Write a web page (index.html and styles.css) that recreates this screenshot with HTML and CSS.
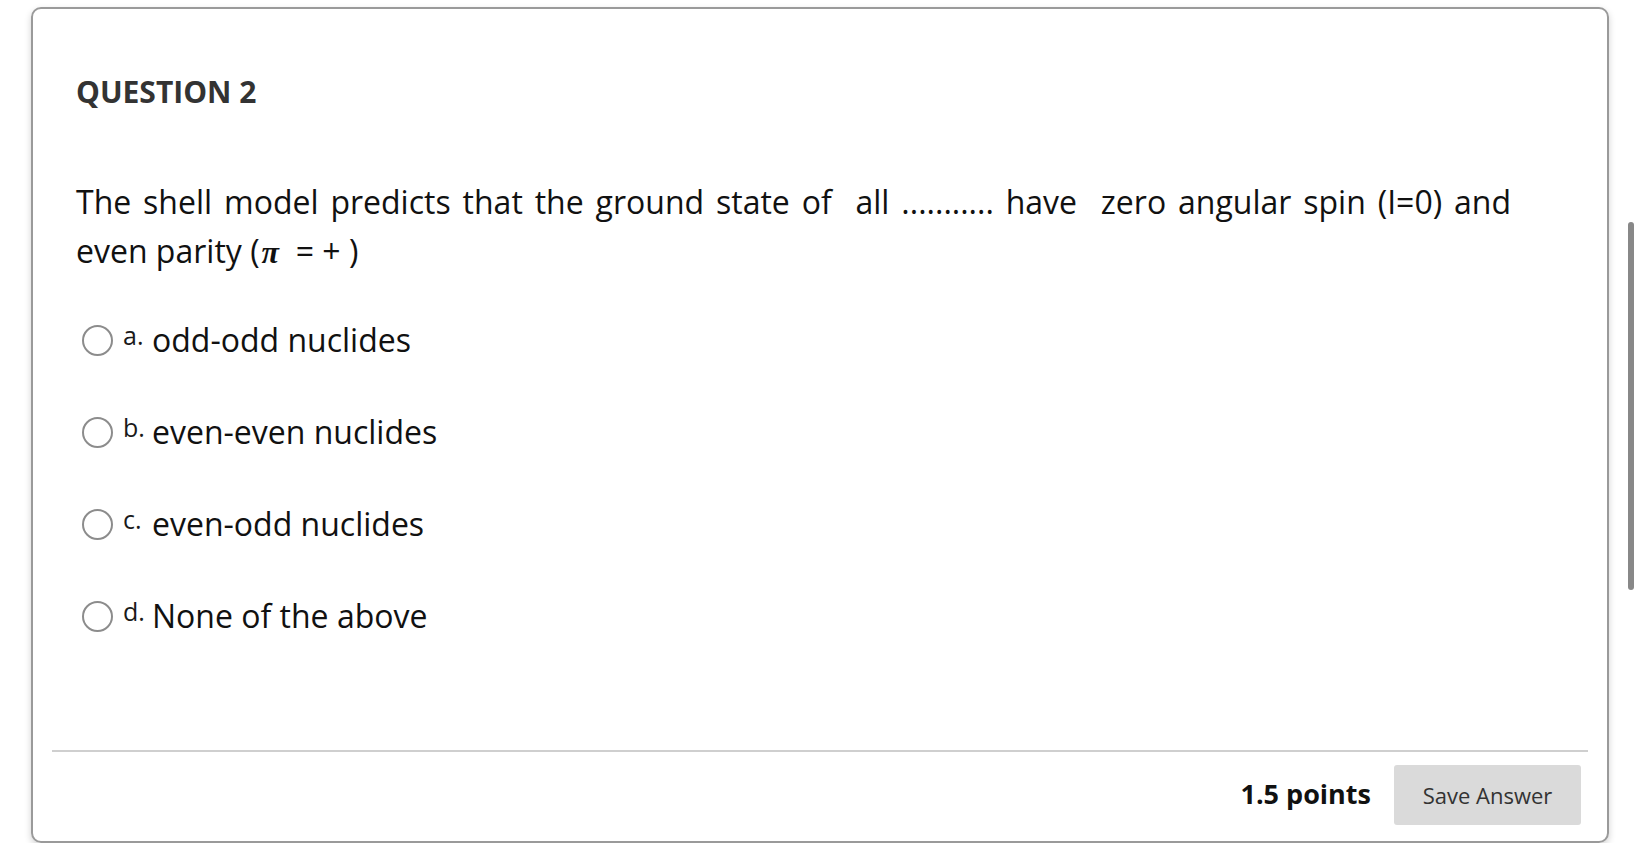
FILE: index.html
```html
<!DOCTYPE html>
<html lang="en">
<head>
    <meta charset="UTF-8">
    <title>Question 2</title>
    <link rel="stylesheet" href="styles.css">
</head>
<body>
    <div class="question-card">
        <h2 class="question-title">QUESTION 2</h2>

        <p class="question-text">The shell model predicts that the ground state of&nbsp; all ........... have&nbsp; zero angular spin (I=0) and even parity (<span class="pi">π</span>&nbsp; = + )</p>

        <ul class="answers">
            <li class="answer">
                <span class="radio"></span>
                <span class="answer-label">a.</span>
                <span class="answer-text">odd-odd nuclides</span>
            </li>
            <li class="answer">
                <span class="radio"></span>
                <span class="answer-label">b.</span>
                <span class="answer-text">even-even nuclides</span>
            </li>
            <li class="answer">
                <span class="radio"></span>
                <span class="answer-label">c.</span>
                <span class="answer-text">even-odd nuclides</span>
            </li>
            <li class="answer">
                <span class="radio"></span>
                <span class="answer-label">d.</span>
                <span class="answer-text">None of the above</span>
            </li>
        </ul>

        <hr class="divider">

        <div class="question-footer">
            <span class="points">1.5 points</span>
            <button class="save-button">Save Answer</button>
        </div>
    </div>

    <div class="scrollbar"></div>
</body>
</html>
```

FILE: styles.css
```css
body {
    margin: 0;
    background-color: #fff;
    font-family: "Open Sans", "Noto Sans", sans-serif;
    color: #111;
}

.question-card {
    box-sizing: border-box;
    width: 1578px;
    margin: 7px 0 0 31px;
    padding: 0 19px;
    border: 2px solid #9a9a9a;
    border-radius: 10px;
    box-shadow: 0 3px 7px rgba(0, 0, 0, 0.18);
}

.question-title {
    margin: 0;
    padding: 63px 0 0 24px;
    font-size: 30px;
    line-height: 40px;
    font-weight: 700;
    color: #333;
}

.question-text {
    margin: 65px 77px 0 24px;
    font-size: 32px;
    line-height: 49px;
    text-align: justify;
    color: #111;
}

.pi {
    margin-left: 2px;
    font-family: "Liberation Serif", serif;
    font-style: italic;
    font-weight: 700;
}

.answers {
    list-style: none;
    margin: 39px 0 0 0;
    padding: 0 0 0 30px;
}

.answer {
    display: flex;
    align-items: center;
    height: 48px;
    margin-bottom: 44px;
}

.answer:last-child {
    margin-bottom: 0;
}

.radio {
    box-sizing: border-box;
    width: 31px;
    height: 31px;
    border: 2.5px solid #8c8c8c;
    border-radius: 50%;
    background-color: #fff;
    flex-shrink: 0;
}

.answer-label {
    align-self: flex-start;
    width: 22px;
    margin: 0 7px 0 10px;
    font-size: 25px;
    line-height: 38px;
    color: #1a1a1a;
}

.answer-text {
    font-size: 32px;
    line-height: 48px;
    color: #111;
}

.divider {
    margin: 110px 0 0 0;
    border: none;
    height: 2px;
    background-color: #cfcfcf;
}

.question-footer {
    display: flex;
    justify-content: flex-end;
    align-items: baseline;
    gap: 23px;
    padding: 13px 7px 16px 0;
}

.points {
    font-size: 27px;
    font-weight: 700;
    color: #111;
}

.save-button {
    width: 187px;
    height: 60px;
    border: none;
    border-radius: 3px;
    background-color: #dadada;
    font-family: "Open Sans", "Noto Sans", sans-serif;
    font-size: 22px;
    color: #333;
}

/* overlay scrollbar thumb of the page */
.scrollbar {
    position: fixed;
    left: 1628px;
    top: 222px;
    width: 6px;
    height: 368px;
    border-radius: 3px;
    background-color: #888;
}
```
